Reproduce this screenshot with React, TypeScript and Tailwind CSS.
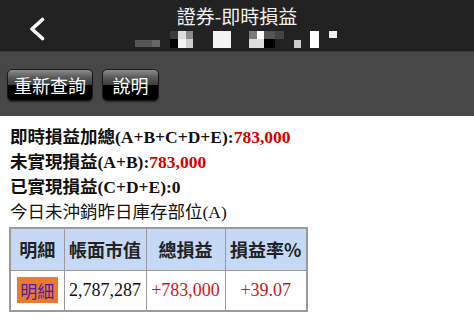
import React from "react";

const serif = "font-['Liberation_Serif','Noto_Sans_CJK_TC',serif]";
const sans = "font-['Noto_Sans_CJK_TC','Noto_Sans',sans-serif]";

function Pixels() {
  const o = 130;
  const r = (x1: number, y1: number, x2: number, y2: number, c: string, k: string) => (
    <rect key={k} x={x1 - o} y={y1 - 30} width={x2 - x1} height={y2 - y1} fill={c} />
  );
  return (
    <svg width="210" height="18" viewBox="0 0 210 18" className="block">
      {r(135, 40, 152, 47, "#555555", "a")}
      {r(152, 40, 160, 47, "#666666", "b")}
      {r(170, 31, 178, 39, "#3a3a3a", "c")}
      {r(170, 39, 178, 48, "#050505", "d")}
      {r(178, 31, 186, 39, "#dddddd", "e")}
      {r(186, 31, 193, 39, "#8a8a8a", "f")}
      {r(178, 39, 186, 48, "#f2f2f2", "g")}
      {r(186, 39, 193, 48, "#cfcfcf", "h")}
      {r(213, 31, 231, 48, "#f4f4f4", "i")}
      {r(249, 31, 257, 39, "#7a7a7a", "j")}
      {r(257, 31, 264, 39, "#ffffff", "k")}
      {r(249, 39, 264, 48, "#dcdcdc", "l")}
      {r(264, 31, 275, 39, "#555555", "m")}
      {r(264, 39, 275, 48, "#000000", "n")}
      {r(275, 31, 284, 39, "#444444", "p")}
      {r(294, 40, 301, 48, "#cccccc", "q")}
      {r(310, 31, 319, 48, "#ffffff", "s")}
      {r(329, 31, 337, 38, "#f0f0f0", "t")}
    </svg>
  );
}

function GlossButton({ label, w }: { label: string; w: string }) {
  return (
    <div
      className={`${w} h-[32px] rounded-[5px] border border-[#1a1a1a] bg-[linear-gradient(to_bottom,#8c8c8c_0%,#5a5a5a_25%,#3c3c3c_50%,#000000_51%,#000000_100%)] flex items-center justify-center text-white text-[18px] leading-none ${sans} shadow-[0_1px_1px_rgba(0,0,0,0.5)]`}
    >
      {label}
    </div>
  );
}

export default function App() {
  return (
    <div className="w-[474px] min-h-[324px] bg-white overflow-hidden">
      <div className="relative h-[52px] bg-[#222222] border-b border-[#383838] flex flex-col items-center">
        <svg
          className="absolute left-[28px] top-[17px]"
          width="18"
          height="24"
          viewBox="0 0 18 24"
        >
          <path d="M14.5 2.5 L4 12 L14.5 21.5" fill="none" stroke="#ffffff" strokeWidth="3.6" strokeLinecap="round" strokeLinejoin="round" />
        </svg>
        <div className={`pt-[4px] text-[19px] leading-[23px] text-[#f0f0f0] ${sans}`}>證券-即時損益</div>
        <div className="mt-[3px] ml-[-4px]">
          <Pixels />
        </div>
      </div>
      <div className="h-[64px] bg-[#474747] flex items-start gap-[9px] pl-[7px] pt-[17px]">
        <GlossButton label="重新查詢" w="w-[86px]" />
        <GlossButton label="說明" w="w-[57px]" />
      </div>
      <div className={`pl-[10px] pt-[9px] text-[17.5px] leading-[25px] text-[#111] ${serif}`}>
        <div className="font-bold">
          即時損益加總(A+B+C+D+E):<span className="text-[#d40000]">783,000</span>
        </div>
        <div className="font-bold">
          未實現損益(A+B):<span className="text-[#d40000]">783,000</span>
        </div>
        <div className="font-bold">已實現損益(C+D+E):0</div>
        <div>今日未沖銷昨日庫存部位(A)</div>
      </div>
      <table className="ml-[9px] mt-[2px] border-collapse border-2 border-[#9a9a9a]">
        <tbody>
          <tr className={`h-[42px] bg-[#c5d9f6] text-[18px] font-bold text-[#222] ${sans}`}>
            <td className="w-[54px] border border-[#9a9a9a] text-center p-0">明細</td>
            <td className="w-[82px] border border-[#9a9a9a] text-center p-0">帳面市值</td>
            <td className="w-[79px] border border-[#9a9a9a] text-center p-0">總損益</td>
            <td className="w-[82px] border border-[#9a9a9a] text-center p-0">損益率%</td>
          </tr>
          <tr className={`h-[41px] bg-white text-[18px] ${serif}`}>
            <td className="border border-[#9a9a9a] p-0">
              <div className="flex justify-center">
                <span className={`w-[41px] h-[26px] bg-[#ec7a2e] text-[#4a20a8] flex items-center justify-center text-[17px] leading-none ${sans}`}>
                  明細
                </span>
              </div>
            </td>
            <td className="border border-[#9a9a9a] text-center p-0 text-[#111]">2,787,287</td>
            <td className="border border-[#9a9a9a] text-center p-0 text-[#c8161e]">+783,000</td>
            <td className="border border-[#9a9a9a] text-center p-0 text-[#c8161e]">+39.07</td>
          </tr>
        </tbody>
      </table>
    </div>
  );
}
